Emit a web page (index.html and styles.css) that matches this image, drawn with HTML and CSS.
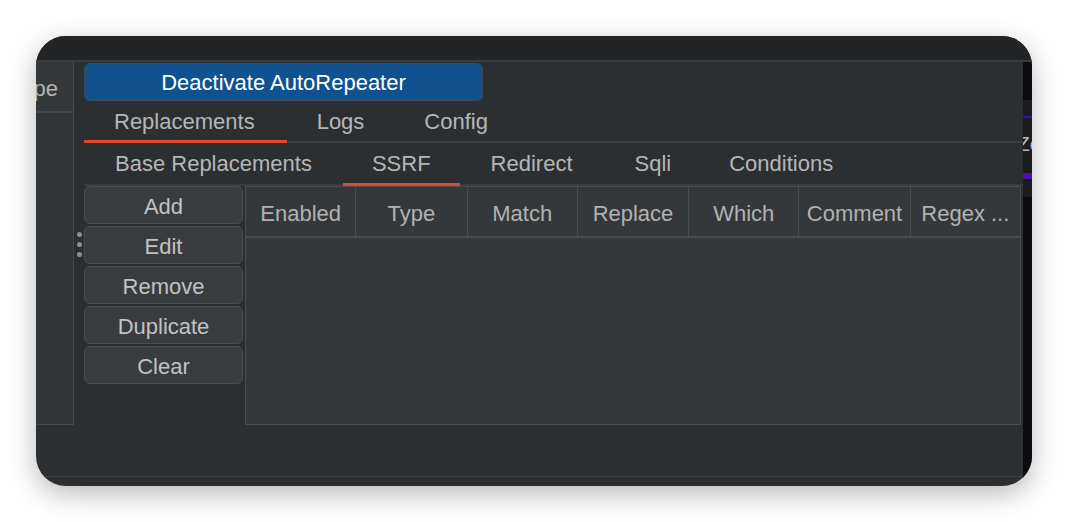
FILE: index.html
```html
<!DOCTYPE html>
<html lang="en">

<head>
    <link rel="stylesheet" href="styles.css">
    <title>AutoRepeater</title>
</head>

<body>
    <div class="janela">
        <div class="barra-titulo"></div>
        <div class="corpo-janela">
            <div class="area">
                <div class="linha">
                    <div class="painel-esq">
                        <div class="aba-esq"><span>Type</span></div>
                        <div class="resto-esq"></div>
                    </div>
                    <div class="divisor">
                        <span class="ponto"></span>
                        <span class="ponto"></span>
                        <span class="ponto"></span>
                    </div>
                    <div class="principal">
                        <button class="botao-desativar">Deactivate AutoRepeater</button>
                        <div class="abas abas-topo">
                            <div class="aba ativa">Replacements</div>
                            <div class="aba">Logs</div>
                            <div class="aba">Config</div>
                        </div>
                        <div class="abas abas-sub">
                            <div class="aba">Base Replacements</div>
                            <div class="aba ativa">SSRF</div>
                            <div class="aba">Redirect</div>
                            <div class="aba">Sqli</div>
                            <div class="aba">Conditions</div>
                        </div>
                        <div class="conteudo">
                            <div class="botoes">
                                <button class="botao">Add</button>
                                <button class="botao">Edit</button>
                                <button class="botao">Remove</button>
                                <button class="botao">Duplicate</button>
                                <button class="botao">Clear</button>
                            </div>
                            <div class="tabela">
                                <div class="cabecalho">
                                    <div class="coluna">Enabled</div>
                                    <div class="coluna">Type</div>
                                    <div class="coluna">Match</div>
                                    <div class="coluna">Replace</div>
                                    <div class="coluna">Which</div>
                                    <div class="coluna">Comment</div>
                                    <div class="coluna">Regex ...</div>
                                </div>
                            </div>
                        </div>
                    </div>
                </div>
                <div class="rodape"></div>
            </div>
            <div class="faixa">
                <div class="faixa-bloco">
                    <div class="roxo-fino"></div>
                    <div class="faixa-texto">Zc</div>
                    <div class="roxo-grosso"></div>
                </div>
            </div>
        </div>
    </div>
</body>

</html>
```

FILE: styles.css
```css
* {
    box-sizing: border-box;
    margin: 0;
    padding: 0;
}

body {
    width: 1068px;
    height: 522px;
    background: #ffffff;
    padding: 36px;
    font-family: "Liberation Sans", Arial, sans-serif;
    overflow: hidden;
}

.janela {
    width: 996px;
    height: 450px;
    border-radius: 30px;
    overflow: hidden;
    background: #2c2f31;
    box-shadow: 0 8px 28px rgba(0, 0, 0, 0.28);
    display: flex;
    flex-direction: column;
}

.barra-titulo {
    height: 26px;
    background: #232426;
    border-bottom: 2px solid #393c3e;
    flex-shrink: 0;
}

.corpo-janela {
    flex: 1;
    display: flex;
}

.area {
    flex: 1;
    display: flex;
    flex-direction: column;
}

.linha {
    height: 414px;
    display: flex;
    align-items: flex-start;
}

.rodape {
    flex: 1;
    border-top: 1px solid #3e4143;
}

.painel-esq {
    width: 38px;
    height: 363px;
    border-right: 1px solid #46494b;
    border-bottom: 1px solid #46494b;
    background: #323537;
    display: flex;
    flex-direction: column;
}

.aba-esq {
    height: 51px;
    background: #35383a;
    border-bottom: 2px solid #434648;
    display: flex;
    justify-content: flex-end;
    align-items: center;
    overflow: hidden;
    padding: 5px 15px 0 0;
    color: #b4b4b4;
    font-size: 22px;
    white-space: nowrap;
}

.divisor {
    width: 10px;
    padding-top: 170px;
    display: flex;
    flex-direction: column;
    align-items: center;
    gap: 5px;
}

.ponto {
    width: 5px;
    height: 5px;
    border-radius: 50%;
    background: #8e9092;
}

.principal {
    width: 939px;
    display: flex;
    flex-direction: column;
}

.botao-desativar {
    margin-top: 1px;
    width: 399px;
    height: 38px;
    padding-top: 1px;
    background: #10518f;
    border: 1px solid #3f4a55;
    border-radius: 6px;
    color: #ffffff;
    font-family: inherit;
    font-size: 22px;
}

.abas {
    display: flex;
    box-shadow: inset 0 -2px 0 #3a3d3f;
}

.abas-topo {
    height: 42px;
}

.abas-sub {
    height: 43px;
}

.aba {
    padding: 0 31px;
    display: flex;
    align-items: center;
    color: #b6b6b6;
    font-size: 22px;
    border-bottom: 3px solid transparent;
    white-space: nowrap;
}

.abas-topo .aba {
    padding: 2px 30px 0;
}

.abas-topo .aba:first-child {
    padding-right: 32px;
}

.abas-sub .aba {
    padding-top: 1px;
}

.abas-sub .aba:nth-child(2) {
    padding: 1px 29px 0;
}

.abas-sub .aba:last-child {
    padding-left: 27px;
}

.aba.ativa {
    border-bottom-color: #e0492a;
}

.conteudo {
    height: 239px;
    display: flex;
    gap: 2px;
}

.botoes {
    width: 159px;
    display: flex;
    flex-direction: column;
    gap: 2px;
}

.botao {
    height: 38px;
    padding-top: 3px;
    background: #393c3f;
    border: 1px solid #4a4d50;
    border-radius: 6px;
    color: #c2c2c2;
    font-family: inherit;
    font-size: 22px;
}

.tabela {
    width: 776px;
    background: #35383a;
    border: 1px solid #4a4d50;
}

.cabecalho {
    height: 51px;
    display: flex;
    border-bottom: 2px solid #4a4d50;
}

.coluna {
    flex: 1;
    display: flex;
    justify-content: center;
    align-items: center;
    padding-top: 4px;
    color: #b2b2b2;
    font-size: 22px;
    border-right: 1px solid #4a4d50;
    white-space: nowrap;
}

.coluna:nth-child(2n) {
    flex-basis: 2px;
}

.coluna:last-child {
    border-right: none;
}

.faixa {
    width: 9px;
    background: #0b0c0f;
    padding-top: 38px;
}

.faixa-bloco {
    height: 97px;
    background: #1b1c20;
    padding-top: 16px;
    overflow: hidden;
}

.roxo-fino {
    height: 2px;
    background: #3c10a8;
}

.faixa-texto {
    height: 55px;
    padding-top: 14px;
    color: #b8b8b8;
    font-size: 21px;
    line-height: 24px;
    margin-left: -6px;
    white-space: nowrap;
}

.roxo-grosso {
    height: 6px;
    background: #4a12b6;
}
```
